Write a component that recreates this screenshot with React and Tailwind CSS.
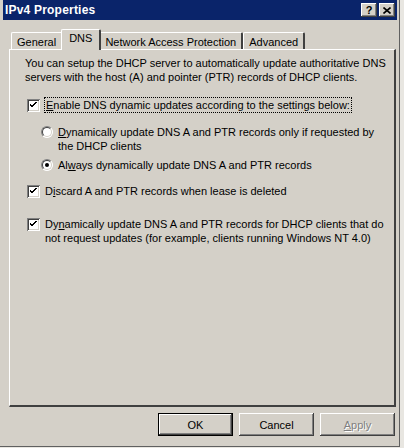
import React from 'react';

const raised =
  'shadow-[inset_-1px_-1px_0_#404040,inset_1px_1px_0_#ffffff,inset_-2px_-2px_0_#808080,inset_2px_2px_0_#d4d0c8]';
const sunken =
  'shadow-[inset_1px_1px_0_#808080,inset_-1px_-1px_0_#ffffff,inset_2px_2px_0_#404040,inset_-2px_-2px_0_#d4d0c8]';

function Check() {
  return (
    <span className={`relative inline-block w-[13px] h-[13px] shrink-0 bg-white ${sunken}`}>
      <svg className="absolute left-[2px] top-[2px]" width="9" height="9" viewBox="0 0 9 9">
        <path d="M1 3.5 L3 5.5 L7.5 1" fill="none" stroke="#000" strokeWidth="2" shapeRendering="crispEdges" />
      </svg>
    </span>
  );
}

function Radio({ on }) {
  return (
    <span className="relative inline-block w-[12px] h-[12px] shrink-0 rounded-full bg-white border border-t-[#808080] border-l-[#808080] border-b-white border-r-white">
      <span className="absolute inset-0 rounded-full border border-t-[#404040] border-l-[#404040] border-b-[#d4d0c8] border-r-[#d4d0c8]" />
      {on && <span className="absolute left-[3px] top-[3px] w-[4px] h-[4px] rounded-full bg-black" />}
    </span>
  );
}

function Tab({ label, active }) {
  if (active) {
    return (
      <div className="relative z-10 -mb-px -mx-[2px] h-[21px] px-[7px] pt-[1px] bg-[#d4d0c8] border-t border-l border-white border-r-2 border-r-[#404040] rounded-t-[2px]">
        {label}
      </div>
    );
  }
  return (
    <div className="h-[17px] px-[5px] pt-[2px] bg-[#d4d0c8] border-t border-l border-white border-r-2 border-r-[#404040] rounded-t-[2px]">
      {label}
    </div>
  );
}

function Btn({ children, def, disabled }) {
  return (
    <div className={`w-[75px] h-[23px] ${def ? 'border border-black' : ''}`}>
      <div
        className={`w-full h-full flex items-center justify-center ${raised} ${
          disabled ? 'text-[#808080] [text-shadow:1px_1px_0_#ffffff]' : ''
        }`}
      >
        {children}
      </div>
    </div>
  );
}

export default function App() {
  return (
    <div className="w-[404px] h-[448px] bg-[#e8e6e1] font-['Liberation_Sans',Arial,sans-serif] text-[11px] leading-[14px] text-black overflow-hidden">
      <div className="w-[400px] h-[447px] bg-[#d4d0c8] border-r border-b border-[#606060] pl-[3px] pr-[2px] flex flex-col">
        {/* title bar */}
        <div className="h-[20px] bg-[#0a246a] flex items-center pl-[2px] pr-[2px]">
          <span className="text-white font-bold text-[12px] tracking-[0.2px]">IPv4 Properties</span>
          <div className="ml-auto flex gap-[2px]">
            <div className={`w-[16px] h-[14px] bg-[#d4d0c8] ${raised} flex items-center justify-center font-bold text-[11px] leading-none`}>?</div>
            <div className={`w-[16px] h-[14px] bg-[#d4d0c8] ${raised} flex items-center justify-center`}>
              <svg width="8" height="7" viewBox="0 0 8 7">
                <path d="M0.5 0.5 L7.5 6.5 M7.5 0.5 L0.5 6.5" stroke="#000" strokeWidth="1.6" />
              </svg>
            </div>
          </div>
        </div>

        {/* tabs */}
        <div className="pl-[8px] pt-[9px] flex items-end">
          <Tab label="General" />
          <Tab label="DNS" active />
          <Tab label="Network Access Protection" />
          <Tab label="Advanced" />
        </div>

        {/* panel */}
        <div className="ml-[6px] mr-[1px] h-[358px] border-t border-l border-white border-r-2 border-b-2 border-r-[#404040] border-b-[#404040] pl-[15px] pr-[8px] pt-[6px]">
          <p>
            You can setup the DHCP server to automatically update authoritative DNS servers with the host (A) and pointer (PTR) records of DHCP clients.
          </p>

          <div className="mt-[13px] flex items-center gap-[4px] pl-[2px]">
            <Check />
            <span className="border border-dotted border-black px-[1px]">
              <u>E</u>nable DNS dynamic updates according to the settings below:
            </span>
          </div>

          <div className="mt-[12px] pl-[16px] flex items-start gap-[5px]">
            <span className="mt-[1px]"><Radio /></span>
            <span>
              <u>D</u>ynamically update DNS A and PTR records only if requested by
              <br />
              the DHCP clients
            </span>
          </div>

          <div className="mt-[5px] pl-[16px] flex items-center gap-[5px]">
            <Radio on />
            <span>
              Al<u>w</u>ays dynamically update DNS A and PTR records
            </span>
          </div>

          <div className="mt-[12px] flex items-center gap-[5px] pl-[2px]">
            <Check />
            <span>
              D<u>i</u>scard A and PTR records when lease is deleted
            </span>
          </div>

          <div className="mt-[19px] flex items-start gap-[5px] pl-[2px]">
            <span className="mt-[1px]"><Check /></span>
            <span>
              Dy<u>n</u>amically update DNS A and PTR records for DHCP clients that do
              <br />
              not request updates (for example, clients running Windows NT 4.0)
            </span>
          </div>
        </div>

        {/* buttons */}
        <div className="mt-[6px] flex justify-end gap-[6px] pr-[2px]">
          <Btn def>OK</Btn>
          <Btn>Cancel</Btn>
          <Btn disabled>
            <span><u>A</u>pply</span>
          </Btn>
        </div>
      </div>
    </div>
  );
}
